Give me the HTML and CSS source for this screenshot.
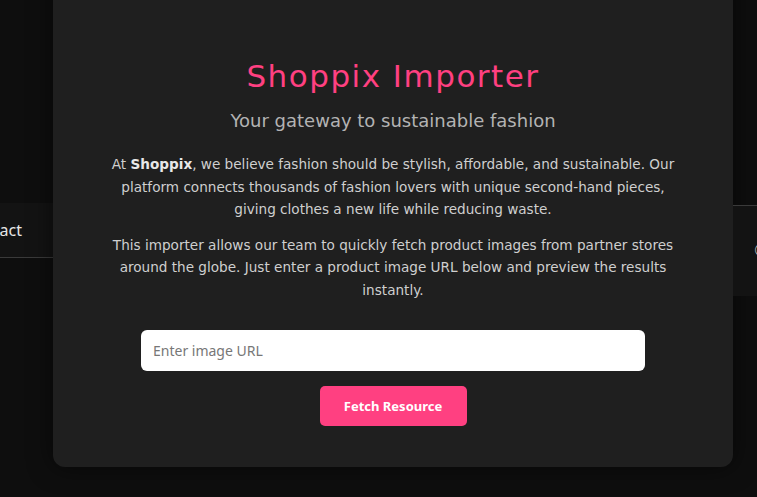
FILE: index.html
```html
<!DOCTYPE html>
<html lang="en">
<head>
<meta charset="utf-8">
<title>Shoppix Importer</title>
<link rel="stylesheet" href="styles.css">
</head>
<body>
<div class="stage">
  <div class="side side-left">
    <div class="side-bar left-bar"><span class="nav-text">Contact</span></div>
  </div>
  <main class="card">
    <h1 class="title">Shoppix Importer</h1>
    <p class="subtitle">Your gateway to sustainable fashion</p>
    <p class="text">At <strong>Shoppix</strong>, we believe fashion should be stylish, affordable, and sustainable. Our platform connects thousands of fashion lovers with unique second-hand pieces, giving clothes a new life while reducing waste.</p>
    <p class="text">This importer allows our team to quickly fetch product images from partner stores around the globe. Just enter a product image URL below and preview the results instantly.</p>
    <form class="form" onsubmit="return false">
      <input class="url-input" type="text" placeholder="Enter image URL">
      <button class="btn" type="submit">Fetch Resource</button>
    </form>
  </main>
  <div class="side side-right">
    <div class="side-bar right-bar"><span class="copy">©</span></div>
  </div>
</div>
</body>
</html>
```
FILE: styles.css
```css
* { box-sizing: border-box; }
html, body {
  margin: 0;
  padding: 0;
  background: #0e0e0e;
  height: 100%;
  overflow: hidden;
}
body {
  font-family: "DejaVu Sans", "Noto Sans", sans-serif;
}
.stage {
  display: flex;
  align-items: flex-start;
  height: 497px;
}
.side {
  display: flex;
  flex-direction: column;
  min-width: 0;
}
.side-left {
  flex: none;
  width: 53px;
  padding-top: 203px;
}
.side-right {
  flex: 1;
  padding-top: 205px;
}
.side-bar {
  background: #131313;
}
.left-bar {
  height: 55px;
  border-bottom: 1px solid #3a3a3a;
  display: flex;
  align-items: center;
  justify-content: flex-end;
  overflow: hidden;
  white-space: nowrap;
  padding-right: 31px;
}
.nav-text {
  font-family: "Noto Sans", sans-serif;
  font-size: 16px;
  color: #e6e6e6;
  flex: none;
}
.right-bar {
  height: 91px;
  border-top: 1px solid #3a3a3a;
  display: flex;
  align-items: center;
  overflow: hidden;
  padding-left: 20px;
}
.copy {
  font-family: "DejaVu Sans", sans-serif;
  font-size: 15px;
  color: #bbb;
}
.card {
  width: 680px;
  flex: none;
  margin-top: -40px;
  background: #1f1f1f;
  border-radius: 12px;
  padding: 98px 48px 41px;
  text-align: center;
  box-shadow: 0 0 24px rgba(0, 0, 0, 0.55);
}
.title {
  margin: 0;
  font-size: 31px;
  line-height: 36px;
  font-weight: 500;
  color: #ff4081;
  letter-spacing: 1.5px;
}
.subtitle {
  margin: 14px 0 0;
  font-size: 18px;
  line-height: 25px;
  color: #b3b3b3;
}
.text {
  margin: 20px 0 0;
  font-size: 13.6px;
  line-height: 22.5px;
  color: #cfcfcf;
}
.text + .text { margin-top: 13px; }
.text strong { color: #e8e8e8; font-weight: 700; }
.form {
  margin-top: 29px;
  display: flex;
  flex-direction: column;
  align-items: center;
  gap: 15px;
}
.url-input {
  width: 504px;
  height: 41px;
  border: none;
  border-radius: 6px;
  background: #fff;
  padding: 0 12px;
  font-family: "Noto Sans", sans-serif;
  font-size: 14px;
  color: #333;
  outline: none;
}
.url-input::placeholder { color: #777; }
.btn {
  width: 147px;
  height: 40px;
  border: none;
  border-radius: 5px;
  background: #ff4081;
  color: #fff;
  font-family: "Noto Sans", sans-serif;
  font-weight: 700;
  font-size: 13px;
  cursor: pointer;
}
```
